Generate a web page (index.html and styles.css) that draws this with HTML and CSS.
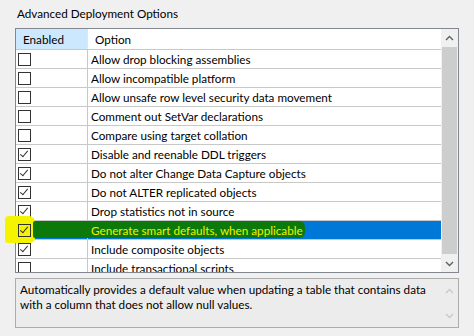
FILE: index.html
```html
<!DOCTYPE html>
<html>
    <head>
        <title>Advanced Deployment Options</title>
        <link rel="stylesheet" href="styles.css">
    </head>
    <body>
        <div class="panel">
            <div class="title">Advanced Deployment Options</div>
            <div class="grid">
                <div class="list">
                    <div class="head">
                        <div class="col-en">Enabled</div>
                        <div class="col-opt">Option</div>
                    </div>
                    <div class="row"><div class="cell-en"><span class="box"></span></div><div class="cell-opt">Allow drop blocking assemblies</div></div>
                    <div class="row"><div class="cell-en"><span class="box"></span></div><div class="cell-opt">Allow incompatible platform</div></div>
                    <div class="row"><div class="cell-en"><span class="box"></span></div><div class="cell-opt">Allow unsafe row level security data movement</div></div>
                    <div class="row"><div class="cell-en"><span class="box"></span></div><div class="cell-opt">Comment out SetVar declarations</div></div>
                    <div class="row"><div class="cell-en"><span class="box"></span></div><div class="cell-opt">Compare using target collation</div></div>
                    <div class="row"><div class="cell-en"><span class="box checked"></span></div><div class="cell-opt">Disable and reenable DDL triggers</div></div>
                    <div class="row"><div class="cell-en"><span class="box checked"></span></div><div class="cell-opt">Do not alter Change Data Capture objects</div></div>
                    <div class="row"><div class="cell-en"><span class="box checked"></span></div><div class="cell-opt">Do not ALTER replicated objects</div></div>
                    <div class="row"><div class="cell-en"><span class="box checked"></span></div><div class="cell-opt">Drop statistics not in source</div></div>
                    <div class="row selected"><div class="cell-en"><span class="box checked marked"></span></div><div class="cell-opt"><span class="marked-text">Generate smart defaults, when applicable</span></div></div>
                    <div class="row"><div class="cell-en"><span class="box checked"></span></div><div class="cell-opt">Include composite objects</div></div>
                    <div class="row last"><div class="cell-en"><span class="box"></span></div><div class="cell-opt">Include transactional scripts</div></div>
                </div>
                <div class="vscroll">
                    <div class="arrow">
                        <svg width="9" height="6" viewBox="0 0 9 6"><path d="M1 5 L4.5 1.5 L8 5" fill="none" stroke="#606060" stroke-width="1.4"/></svg>
                    </div>
                    <div class="thumb"></div>
                    <div class="arrow">
                        <svg width="9" height="6" viewBox="0 0 9 6"><path d="M1 1 L4.5 4.5 L8 1" fill="none" stroke="#606060" stroke-width="1.4"/></svg>
                    </div>
                </div>
            </div>
            <div class="desc">
                <div class="desc-text">Automatically provides a default value when updating a table that contains data with a column that does not allow null values.</div>
                <div class="desc-scroll">
                    <svg width="9" height="6" viewBox="0 0 9 6"><path d="M1 5 L4.5 1.5 L8 5" fill="none" stroke="#c8c8c8" stroke-width="1.3"/></svg>
                    <svg width="9" height="6" viewBox="0 0 9 6"><path d="M1 1 L4.5 4.5 L8 1" fill="none" stroke="#c8c8c8" stroke-width="1.3"/></svg>
                </div>
            </div>

            <!-- highlighter marks drawn over the list -->
            <div class="mark-yellow"></div>
            <div class="mark-green"></div>
        </div>
    </body>
</html>
```

FILE: styles.css
```css
body {
    margin: 0;
    background-color: #f0f0f0;
    font-family: Lato, "Noto Sans", sans-serif;
    font-size: 11.7px;
    color: #000;
}
.panel {
    position: relative;
    width: 444px;
    padding: 5px 15px 0 15px;
}
.title {
    height: 23px;
    line-height: 17px;
    padding-left: 2px;
}
.grid {
    display: flex;
    height: 243px;
    border: 1px solid #828790;
    background-color: #fff;
    overflow: hidden;
}
.list {
    flex: 1;
}
.head {
    display: flex;
    height: 20px;
    border-bottom: 1px solid #c8c8c8;
    line-height: 20px;
}
.col-en {
    width: 64px;
    padding-left: 7px;
    background-color: #cce8ff;
}
.col-opt {
    flex: 1;
    padding-left: 7px;
    border-left: 1px solid #e5e5e5;
}
.row {
    display: flex;
    height: 18px;
    line-height: 18px;
    border-bottom: 1px solid #c8c8c8;
}
.cell-en {
    width: 71px;
    display: flex;
    align-items: center;
    padding-left: 2px;
    box-sizing: border-box;
}
.cell-opt {
    flex: 1;
    padding-left: 3px;
    border-left: 1px solid #c8c8c8;
    white-space: nowrap;
}
.box {
    width: 11px;
    height: 11px;
    border: 1px solid #333;
    background-color: #fff;
    position: relative;
}
.box.checked::after {
    content: "";
    position: absolute;
    left: 3px;
    top: 0px;
    width: 3px;
    height: 7px;
    border-right: 1px solid #333;
    border-bottom: 1px solid #333;
    transform: rotate(40deg);
}
.row.selected {
    background-color: #0078d7;
}
.box.marked {
    background-color: #f4f400;
    z-index: 2;
}
.marked-text {
    position: relative;
    z-index: 2;
    color: #f0f000;
}
.vscroll {
    width: 17px;
    display: flex;
    flex-direction: column;
    background-color: #f0f0f0;
}
.arrow {
    height: 17px;
    display: flex;
    align-items: center;
    justify-content: center;
}
.thumb {
    flex: 1;
    margin: 1px 1px;
    background-color: #cdcdcd;
}
.desc {
    display: flex;
    height: 48px;
    margin-top: 5px;
    border: 1px solid #acacac;
    background-color: #ececec;
}
.desc-text {
    flex: 1;
    padding: 3px 0 0 4px;
    line-height: 15px;
}
.desc-scroll {
    width: 17px;
    display: flex;
    flex-direction: column;
    justify-content: space-between;
    align-items: center;
    padding: 9px 0 8px 0;
}
.mark-yellow {
    position: absolute;
    left: 5px;
    top: 216px;
    width: 30px;
    height: 27px;
    border-radius: 4px 6px 5px 3px;
    background-color: #f4f400;
    z-index: 1;
}
.mark-green {
    position: absolute;
    left: 33px;
    top: 221px;
    width: 272px;
    height: 17px;
    border-radius: 2px 6px 6px 2px;
    background-color: #0b7a0b;
    z-index: 1;
}
```
